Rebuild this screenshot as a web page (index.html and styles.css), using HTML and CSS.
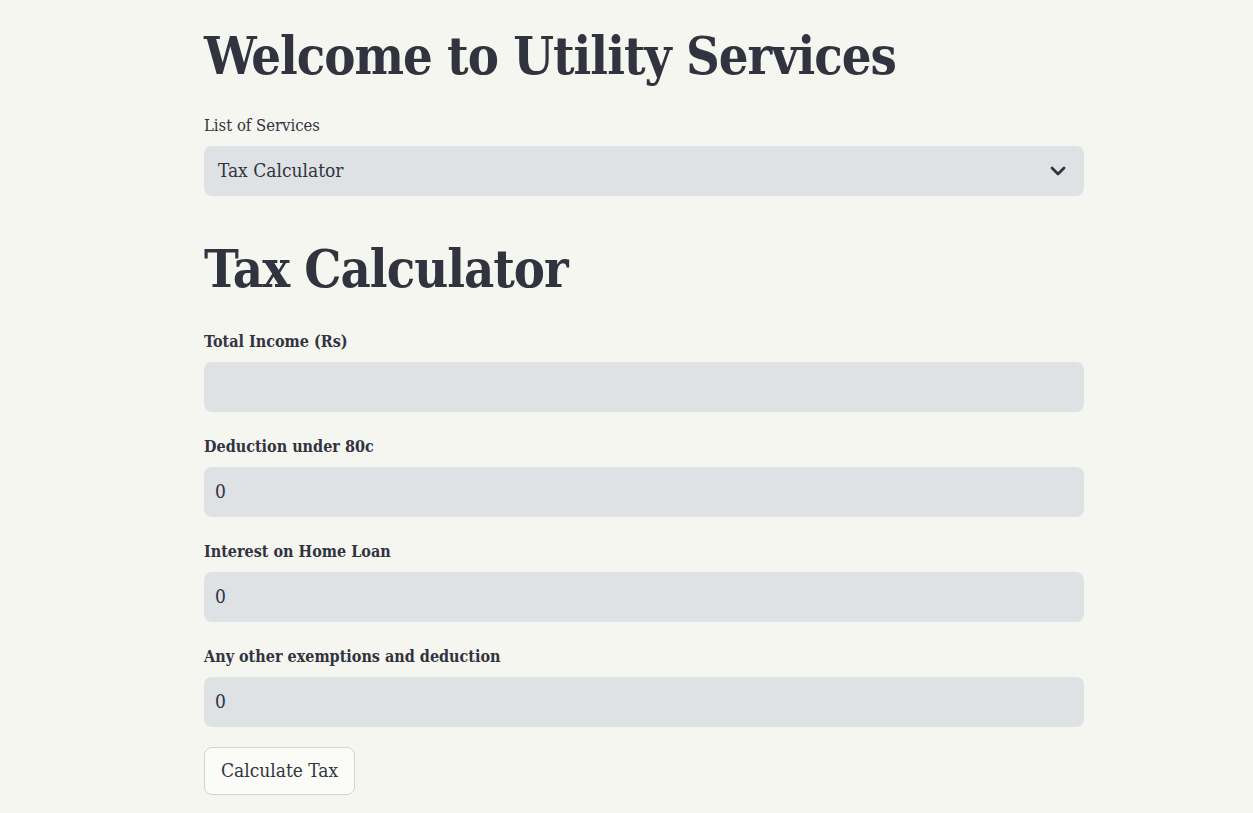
FILE: index.html
```html
<!DOCTYPE html>
<html lang="en">
<head>
<meta charset="utf-8">
<title>Utility Services</title>
<link rel="stylesheet" href="styles.css">
</head>
<body>
<main class="main">
  <h1 class="title">Welcome to Utility Services</h1>
  <div class="select-block">
    <div class="select-label">List of Services</div>
    <div class="select">
      <span class="select-value">Tax Calculator</span>
      <svg class="chevron" width="16" height="10" viewBox="0 0 16 10"><path d="M2 2 L8 8 L14 2" fill="none" stroke="#31333f" stroke-width="2.8" stroke-linecap="round" stroke-linejoin="round"/></svg>
    </div>
  </div>
  <h1 class="section-title">Tax Calculator</h1>
  <div class="field">
    <label class="field-label">Total Income (Rs)</label>
    <div class="input"></div>
  </div>
  <div class="field">
    <label class="field-label">Deduction under 80c</label>
    <div class="input">0</div>
  </div>
  <div class="field">
    <label class="field-label">Interest on Home Loan</label>
    <div class="input">0</div>
  </div>
  <div class="field">
    <label class="field-label">Any other exemptions and deduction</label>
    <div class="input">0</div>
  </div>
  <button class="btn">Calculate Tax</button>
</main>
</body>
</html>
```

FILE: styles.css
```css
html, body {
  margin: 0;
  padding: 0;
}
body {
  background: #f5f6f0;
  color: #31333f;
  font-family: "DejaVu Serif", "Liberation Serif", serif;
  font-stretch: semi-condensed;
}
.main {
  width: 880px;
  margin-left: 204px;
  padding-top: 24px;
}
.title, .section-title {
  margin: 0;
  font-size: 52px;
  line-height: 64px;
  font-weight: 700;
  letter-spacing: -1px;
  color: #31333f;
}
.select-block {
  margin-top: 27px;
}
.select-label {
  font-size: 16.5px;
  line-height: 21px;
  margin-bottom: 10px;
}
.select {
  height: 50px;
  box-sizing: border-box;
  background: #dee2e5;
  border-radius: 8px;
  display: flex;
  align-items: center;
  justify-content: space-between;
  padding: 0 18px 3px 14px;
}
.select-value {
  font-size: 19px;
}
.chevron {
  display: block;
  margin-top: 3px;
}
.section-title {
  margin-top: 41px;
}
.field {
  margin-top: 30px;
}
.field + .field {
  margin-top: 24px;
}
.field-label {
  display: block;
  font-size: 16px;
  line-height: 21px;
  font-weight: 700;
  margin-bottom: 10px;
}
.input {
  height: 50px;
  box-sizing: border-box;
  background: #dee2e5;
  border-radius: 8px;
  display: flex;
  align-items: center;
  padding: 0 11px 3px;
  font-size: 19px;
}
.btn {
  margin-top: 20px;
  height: 48px;
  width: 151px;
  border: 1px solid #d3d4d0;
  border-radius: 8px;
  background: #fbfbf8;
  color: #31333f;
  font-family: inherit;
  font-stretch: inherit;
  font-size: 19px;
  padding: 0 0 3px;
}
```
